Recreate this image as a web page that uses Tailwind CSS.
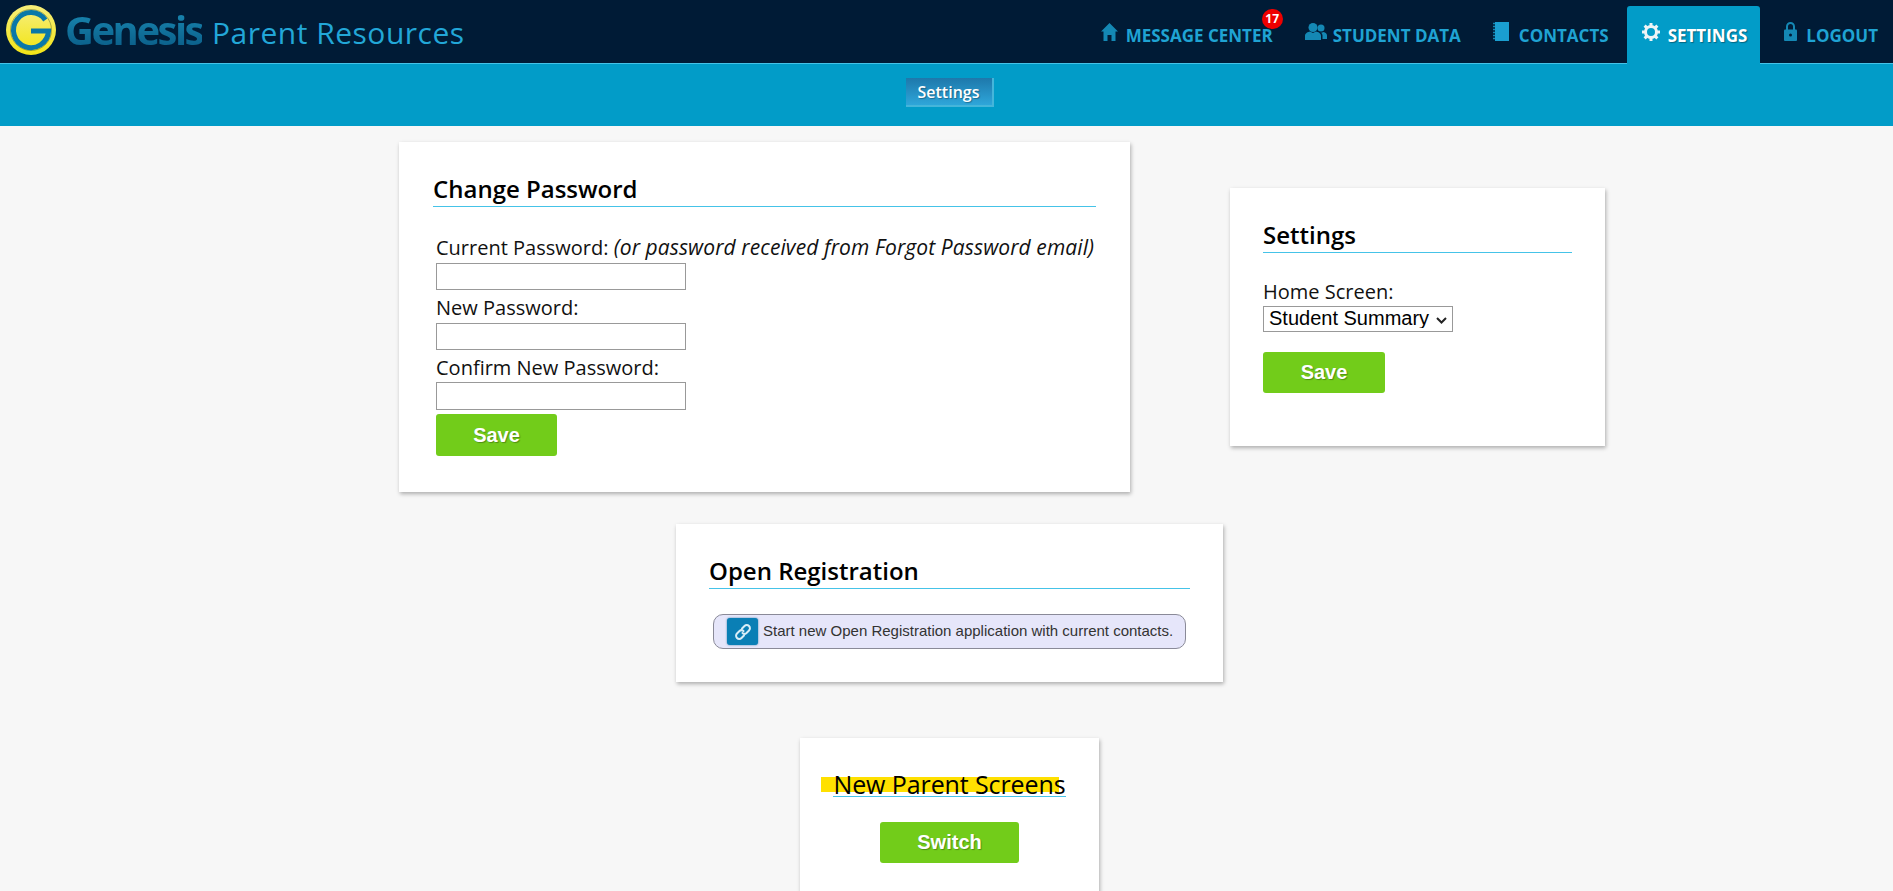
<!DOCTYPE html>
<html lang="en">
    <head>
        <meta charset="UTF-8">
        <title>Genesis Parent Resources</title>
        <script src="https://cdn.jsdelivr.net/npm/@tailwindcss/browser@4"></script>
    </head>
    <body class="h-screen overflow-hidden bg-[#f7f7f7] font-['Open_Sans',sans-serif] text-[#111]">
        <!-- top bar -->
        <header class="flex h-[64px] justify-between border-b border-[#45c3e8] bg-[#001b36]">
            <div class="flex items-center pl-[6px]">
                <svg class="mb-[4px] h-[50px] w-[50px]" viewBox="0 0 50 50">
                    <defs>
                        <linearGradient id="ring" x1="0" y1="0" x2="0" y2="1">
                            <stop offset="0" stop-color="#f6ee7a"/>
                            <stop offset="1" stop-color="#f3e516"/>
                        </linearGradient>
                    </defs>
                    <circle cx="25" cy="25" r="25" fill="url(#ring)"/>
                    <circle cx="25" cy="25" r="20.500" fill="url(#ring)" stroke="#5f6a30" stroke-width="0.500"/>
                    <path d="M39.300 15A17.500 17.500 0 1 0 42.500 26H25" fill="none" stroke="#0a78a8" stroke-width="5"/>
                </svg>
                <span class="mb-[3px] ml-[9px] bg-gradient-to-b from-[#1d93bd] to-[#07527c] bg-clip-text text-[40px] font-bold tracking-[-2.500px] text-transparent">Genesis</span>
                <span class="mt-[1px] ml-[10px] text-[30px] tracking-[0.5px] text-[#22a7d8]">Parent Resources</span>
            </div>
            <nav class="-mb-px flex items-end gap-1 pr-[3px] text-[17px] font-bold text-[#1fa3d3] uppercase">
                <a class="relative flex h-[58px] items-center gap-[8px] pt-[2px] pr-[9px] pl-[22px]">
                    <svg class="mb-[9px] h-[18px] w-[17px] fill-[#1488b4]" viewBox="0 0 17 18"><path d="M8.500 0 17 8.500H14.500V18H10.500V12H6.500V18H2.500V8.500H0Z"/></svg>
                    <span>Message Center</span>
                    <span class="absolute top-[3px] left-[183px] flex h-[20px] w-[21px] items-center justify-center rounded-full bg-[#ee0000] text-[12px] text-white">17</span>
                </a>
                <a class="flex h-[58px] items-center gap-[6px] pt-[2px] pr-[12px] pl-[19px]">
                    <svg class="mb-[9px] h-[17px] w-[22px] fill-[#1488b4]" viewBox="0 0 22 17"><circle cx="8" cy="4.500" r="4.500"/><path d="M0 17V13C0 10 3 9 5 8.500L8 10 11 8.500C13 9 16 10 16 13V17Z"/><circle cx="16" cy="5" r="3.500"/><path d="M17.500 16V12.500C17.500 11 16.500 9.800 15 9L16.500 9.800 18.500 9C20.500 9.500 22 10.500 22 12.500V16Z"/></svg>
                    <span>Student Data</span>
                </a>
                <a class="flex h-[58px] items-center gap-[10px] pt-[2px] pr-[14px] pl-[16px]">
                    <svg class="mb-[9px] h-[19px] w-[16px]" viewBox="0 0 16 19"><rect x="2" width="14" height="19" fill="#1a9ed0"/><path d="M0 1.500H2M0 4.500H2M0 7.500H2M0 10.500H2M0 13.500H2M0 16.500H2" stroke="#1488b4" stroke-width="1.500"/></svg>
                    <span>Contacts</span>
                </a>
                <a class="flex h-[58px] items-center gap-[8px] rounded-t-[3px] bg-[#029cc8] pt-[2px] pr-[13px] pl-[15px] text-white [text-shadow:1px_1px_1px_rgba(0,0,0,.35)]">
                    <svg class="mb-[9px] h-[18px] w-[18px]" viewBox="0 0 18 18"><circle cx="9" cy="9" r="5.500" fill="none" stroke="#eef4f6" stroke-width="3"/><path d="M9 0V4M9 14V18M0 9H4M14 9H18M2.600 2.600 5.400 5.400M12.600 12.600 15.400 15.400M2.600 15.400 5.400 12.600M12.600 5.400 15.400 2.600" stroke="#eef4f6" stroke-width="3"/></svg>
                    <span>Settings</span>
                </a>
                <a class="flex h-[58px] items-center gap-[9px] pt-[2px] pr-[12px] pl-[20px]">
                    <svg class="mb-[9px] h-[19px] w-[13px]" viewBox="0 0 13 19"><path d="M3 8V4.500A3.500 3.500 0 0 1 10 4.500V8" fill="none" stroke="#1488b4" stroke-width="2"/><rect y="7.500" width="13" height="11.500" rx="1" fill="#1488b4"/><circle cx="6.500" cy="13" r="1.500" fill="#001b36"/></svg>
                    <span>Logout</span>
                </a>
            </nav>
        </header>

        <!-- sub menu -->
        <div class="flex h-[62px] items-start justify-center bg-[#029cc8] pt-[14px] pl-[6px]">
            <a class="flex h-[29px] w-[88px] items-center justify-center border-r-2 border-b-2 border-[#45b5da] bg-gradient-to-b from-[#1e78ab] to-[#2ea6da] text-[16px] font-semibold text-white [text-shadow:1px_1px_1px_rgba(0,0,0,.3)]">Settings</a>
        </div>

        <main>
            <div class="flex items-start pt-[16px] pl-[399px]">
                <!-- change password -->
                <section class="h-[350px] w-[731px] bg-white px-[34px] pt-[32px] shadow-[1px_2px_4px_rgba(0,0,0,.3)]">
                    <h2 class="border-b border-[#45c3e8] pb-[2px] text-[24px] leading-[30px] font-semibold text-black">Change Password</h2>
                    <form class="mt-[23px] pl-[3px]">
                        <label class="block pt-[5px] pb-[3px] text-[20px] leading-[25px]">Current Password: <i class="text-[21px] tracking-[0.1px]">(or password received from Forgot Password email)</i></label>
                        <input class="block h-[27px] w-[250px] border border-[#999] bg-white" type="password">
                        <label class="block pt-[5px] pb-[3px] text-[20px] leading-[25px]">New Password:</label>
                        <input class="block h-[27px] w-[250px] border border-[#999] bg-white" type="password">
                        <label class="block pt-[5px] pb-[2px] text-[20px] leading-[25px]">Confirm New Password:</label>
                        <input class="block h-[28px] w-[250px] border border-[#999] bg-white" type="password">
                        <button class="mt-[4px] h-[42px] w-[121px] rounded-[3px] bg-[#72cc1a] font-['Liberation_Sans',sans-serif] text-[20px] font-bold text-white [text-shadow:1px_1px_1px_rgba(0,0,0,.3)]" type="button">Save</button>
                    </form>
                </section>

                <!-- settings -->
                <section class="mt-[46px] ml-[100px] h-[258px] w-[375px] bg-white px-[33px] pt-[32px] shadow-[1px_2px_4px_rgba(0,0,0,.3)]">
                    <h2 class="border-b border-[#45c3e8] pb-[2px] text-[24px] leading-[30px] font-semibold text-black">Settings</h2>
                    <label class="mt-[26px] mb-[2px] block text-[20px] leading-[25px]">Home Screen:</label>
                    <div class="relative w-[190px]">
                        <select class="block h-[26px] w-full appearance-none border border-[#999] bg-white pb-[2px] pl-[5px] font-['Liberation_Sans',sans-serif] text-[20px] leading-[20px] text-black">
                            <option>Student Summary</option>
                        </select>
                        <svg class="pointer-events-none absolute top-[11px] left-[173px] h-[7px] w-[11px]" viewBox="0 0 11 7" fill="none" stroke="#222" stroke-width="2"><path d="M1 1 5.500 5.500 10 1"/></svg>
                    </div>
                    <button class="mt-[20px] block h-[41px] w-[122px] rounded-[3px] bg-[#72cc1a] pb-[2px] font-['Liberation_Sans',sans-serif] text-[20px] font-bold text-white [text-shadow:1px_1px_1px_rgba(0,0,0,.3)]" type="button">Save</button>
                </section>
            </div>

            <!-- open registration -->
            <section class="mt-[32px] ml-[676px] h-[158px] w-[547px] bg-white px-[33px] pt-[32px] shadow-[1px_2px_4px_rgba(0,0,0,.3)]">
                <h2 class="border-b border-[#45c3e8] pb-[2px] text-[24px] leading-[30px] font-semibold text-black">Open Registration</h2>
                <a class="mt-[25px] ml-[4px] flex h-[35px] w-[473px] items-center rounded-[10px] border border-[#8a8a98] bg-[#e6e6fa] pl-[13px] font-['Liberation_Sans',sans-serif] text-[15px] text-[#333]">
                    <span class="mr-[5px] flex h-[27px] w-[31px] items-center justify-center rounded-[3px] bg-[#0a7fb5] shadow-[0_0_2px_rgba(10,100,150,.8)]">
                        <svg class="h-[16px] w-[16px]" viewBox="0 0 16 16" fill="none" stroke="#d8eef7" stroke-width="2" stroke-linecap="round"><path d="M7 4.500 9.500 2A3 3 0 0 1 14 6.500L11.500 9A3 3 0 0 1 7.500 9"/><path d="M9 11.500 6.500 14A3 3 0 0 1 2 9.500L4.500 7A3 3 0 0 1 8.500 7"/></svg>
                    </span>
                    Start new Open Registration application with current contacts.
                </a>
            </section>

            <!-- new parent screens -->
            <section class="mt-[56px] ml-[800px] flex h-[200px] w-[299px] flex-col items-center bg-white pt-[35px] shadow-[1px_2px_4px_rgba(0,0,0,.3)]">
                <h2 class="relative border-b border-[#45c3e8] text-[25px] leading-[23px] font-medium tracking-[-0.1px] text-black">
                    <span class="absolute top-[4px] left-[-12px] h-[15px] w-[238px] bg-[#ffe000]"></span>
                    <span class="relative">New Parent Screens</span>
                </h2>
                <button class="mt-[25px] h-[41px] w-[139px] rounded-[3px] bg-[#72cc1a] pb-[2px] font-['Liberation_Sans',sans-serif] text-[20px] font-bold text-white [text-shadow:1px_1px_1px_rgba(0,0,0,.3)]" type="button">Switch</button>
            </section>
        </main>
    </body>
</html>
